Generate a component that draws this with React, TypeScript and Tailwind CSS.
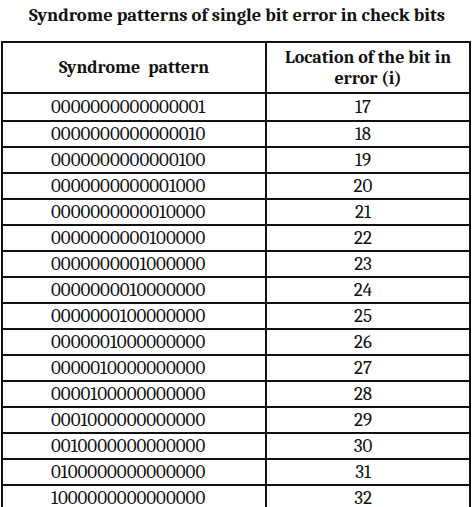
import React from 'react';

const rows: [string, number][] = Array.from({ length: 16 }, (_, i) => [
  '0'.repeat(15 - i) + '1' + '0'.repeat(i),
  17 + i,
]);

const App: React.FC = () => {
  return (
    <div className="w-[474px] h-[507px] overflow-hidden bg-white text-[#111] font-serif">
      {/* table caption, cut off at the top of the crop */}
      <div className="-mt-[14px] h-[18px] text-center text-[15px] leading-[18px] tracking-wide">TABLE 2.</div>
      <h2 className="h-[23px] text-center text-[18.5px] font-bold leading-[23px]">
        Syndrome patterns of single bit error in check bits
      </h2>

      <div className="mt-[14px] ml-px w-[470px] border-2 border-b-0 border-[#111]">
        <div className="flex h-[51px] border-b-2 border-[#111] font-bold text-[18px] leading-[21px]">
          <div className="flex w-[264px] items-center justify-center border-r-2 border-[#111] whitespace-pre">
            {'Syndrome  pattern'}
          </div>
          <div className="flex flex-1 items-center justify-center text-center">
            Location of the bit in
            <br />
            error (i)
          </div>
        </div>

        {rows.map(([pattern, loc], i) => (
          <div
            key={loc}
            className={`flex border-b-2 border-[#111] text-[19px] leading-[24px] ${i === 0 ? 'h-[28px]' : 'h-[26px]'}`}
          >
            <div className="flex w-[264px] items-center border-r-2 border-[#111] pl-[48px]">{pattern}</div>
            <div className="flex flex-1 items-center justify-center pr-[10px]">{loc}</div>
          </div>
        ))}
      </div>
    </div>
  );
};

export default App;
